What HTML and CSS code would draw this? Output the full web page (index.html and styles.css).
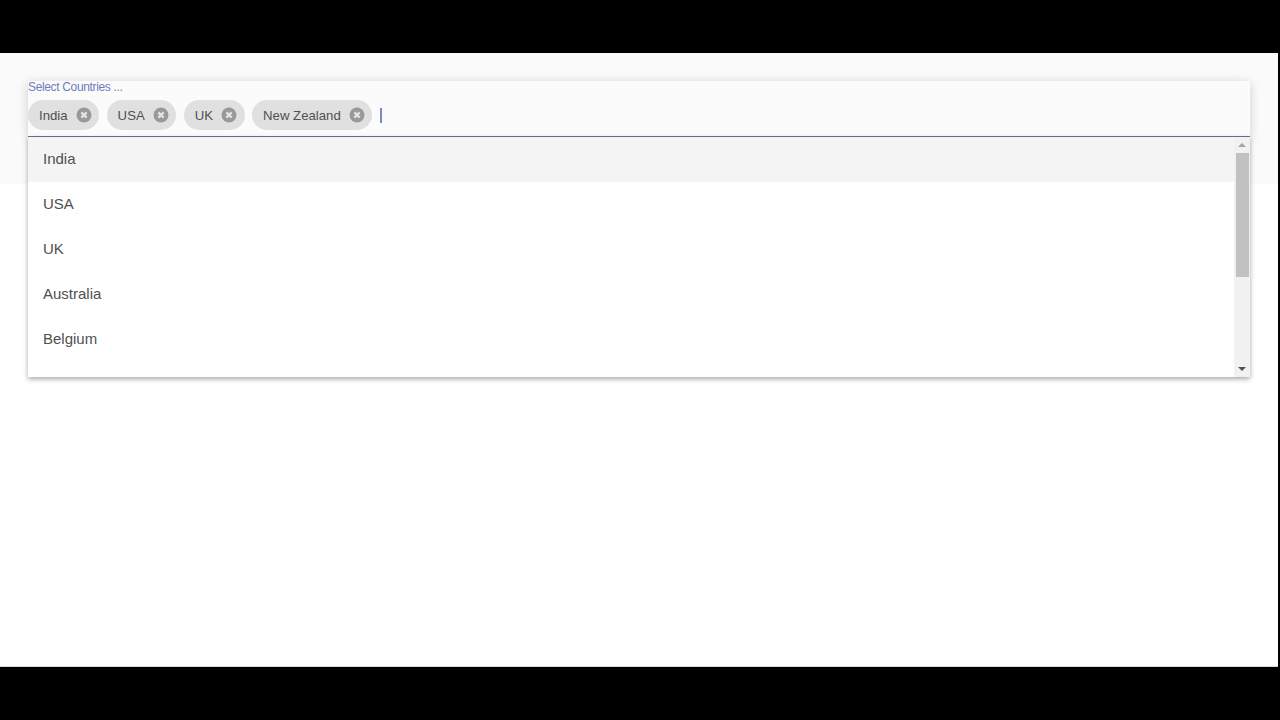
FILE: index.html
```html
<!DOCTYPE html>
<html lang="en">
<head>
    <meta charset="UTF-8">
    <meta name="viewport" content="width=device-width, initial-scale=1.0">
    <title>Select Countries</title>
    <link rel="stylesheet" href="styles.css">
</head>
<body>
    <div class="screen">
        <div class="band">
            <div class="field">
                <label class="field-label">Select Countries ...</label>
                <div class="chip-row">
                    <span class="chip">India
                        <svg class="chip-remove" viewBox="0 0 24 24"><circle cx="12" cy="12" r="10"/><path d="M8.5 8.5l7 7M15.5 8.5l-7 7"/></svg>
                    </span>
                    <span class="chip">USA
                        <svg class="chip-remove" viewBox="0 0 24 24"><circle cx="12" cy="12" r="10"/><path d="M8.5 8.5l7 7M15.5 8.5l-7 7"/></svg>
                    </span>
                    <span class="chip">UK
                        <svg class="chip-remove" viewBox="0 0 24 24"><circle cx="12" cy="12" r="10"/><path d="M8.5 8.5l7 7M15.5 8.5l-7 7"/></svg>
                    </span>
                    <span class="chip">New Zealand
                        <svg class="chip-remove" viewBox="0 0 24 24"><circle cx="12" cy="12" r="10"/><path d="M8.5 8.5l7 7M15.5 8.5l-7 7"/></svg>
                    </span>
                    <span class="caret"></span>
                </div>
            </div>
        </div>

        <div class="panel">
            <ul class="options">
                <li class="option active">India</li>
                <li class="option">USA</li>
                <li class="option">UK</li>
                <li class="option">Australia</li>
                <li class="option">Belgium</li>
            </ul>
            <div class="scrollbar">
                <span class="arrow arrow-up"></span>
                <span class="thumb"></span>
                <span class="arrow arrow-down"></span>
            </div>
        </div>
    </div>
</body>
</html>
```

FILE: styles.css
```css
body {
    margin: 0;
    height: 720px;
    overflow: hidden;
    background-color: #000;
    font-family: "Liberation Sans", Arial, sans-serif;
}
.screen {
    position: relative;
    height: 614px;
    margin: 53px 2px 0 0;
    background-color: #fff;
    border-bottom: 1px solid #d8d8d8;
    box-sizing: border-box;
}
.band {
    height: 131px;
    padding: 28px 28px 0;
    box-sizing: border-box;
    background-color: #fafafa;
}
.field {
    height: 56px;
    box-sizing: border-box;
    background-color: #fbfbfb;
    border-bottom: 1px solid #6470a8;
    box-shadow: 0 2px 10px rgba(0, 0, 0, 0.18);
}
.field-label {
    display: block;
    height: 19px;
    font-size: 12px;
    line-height: 13px;
    letter-spacing: -0.35px;
    color: #6f7bbb;
}
.chip-row {
    display: flex;
    align-items: center;
    gap: 7.5px;
}
.chip {
    display: flex;
    align-items: center;
    height: 30px;
    padding: 0 6.5px 0 11px;
    border-radius: 15px;
    background-color: #e0e0e0;
    font-size: 13.2px;
    color: #505050;
}
.chip-remove {
    width: 18px;
    height: 18px;
    margin-left: 7px;
    fill: #999;
    stroke: none;
}
.chip-remove path {
    fill: none;
    stroke: #e4e4e4;
    stroke-width: 3;
}
.caret {
    width: 2px;
    height: 15px;
    background-color: #7d88c4;
}
.panel {
    position: absolute;
    top: 84px;
    left: 28px;
    right: 28px;
    display: flex;
    height: 240px;
    background-color: #fff;
    box-shadow: 0 2px 5px rgba(0, 0, 0, 0.35);
}
.options {
    flex: 1;
    margin: 0;
    padding: 0;
    list-style: none;
    overflow: hidden;
}
.option {
    height: 45px;
    padding-left: 15px;
    font-size: 15px;
    line-height: 44px;
    color: #505050;
}
.option.active {
    background-color: #f4f4f4;
}
.scrollbar {
    display: flex;
    flex-direction: column;
    align-items: center;
    width: 16px;
    background-color: #f1f1f1;
}
.arrow {
    width: 0;
    height: 0;
    border-left: 4px solid transparent;
    border-right: 4px solid transparent;
}
.arrow-up {
    margin-top: 6px;
    border-bottom: 4px solid #a3a3a3;
}
.thumb {
    width: 13px;
    height: 124px;
    margin-top: 6px;
    background-color: #c1c1c1;
}
.arrow-down {
    margin-top: auto;
    margin-bottom: 6px;
    border-top: 4px solid #505050;
}
```
